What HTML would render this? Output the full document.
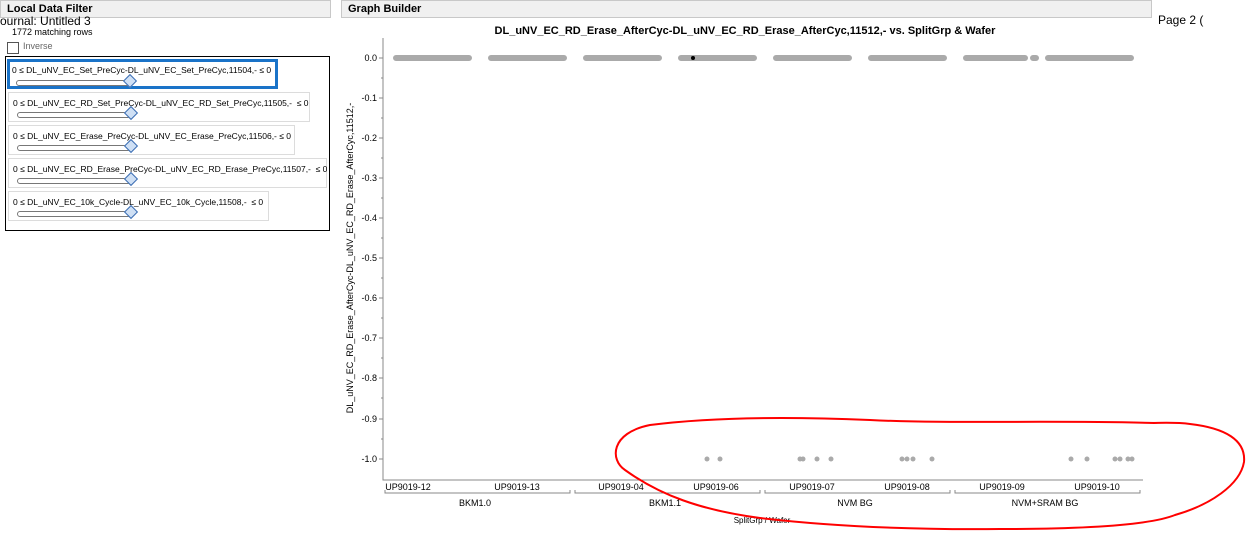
<!DOCTYPE html>
<html><head><meta charset="utf-8"><style>
body{margin:0;width:1246px;height:536px;background:#fff;font-family:"Liberation Sans",sans-serif;position:relative;overflow:hidden}
.hdr{position:absolute;height:17px;background:#f0f0f0;border:1px solid #c8c8c8;font-weight:bold;font-size:11px;line-height:17px;padding-left:6px;box-sizing:border-box}
.f{position:absolute;border:1px solid #dcdcdc;background:#fff;font-size:8.5px;height:30px;box-sizing:border-box}
.f span{position:absolute;left:4px;top:5px;white-space:nowrap}
.sl{position:absolute;left:8px;top:19px;width:114px;height:4px;border:1px solid #777;border-radius:3px}
.kn{position:absolute;left:117px;top:15px;width:8px;height:8px;border:1px solid #3b6db3;background:#cfe0f5;transform:rotate(45deg)}
</style></head><body>
<div class="hdr" style="left:0;top:0;width:331px;height:18px">Local Data Filter</div>
<div style="position:absolute;left:0;top:14px;font-size:12px">ournal: Untitled 3</div>
<div style="position:absolute;left:12px;top:27px;font-size:9px">1772 matching rows</div>
<div style="position:absolute;left:7px;top:42px;width:10px;height:10px;border:1px solid #555"></div>
<div style="position:absolute;left:23px;top:41px;font-size:9px;color:#666">Inverse</div>
<div style="position:absolute;left:5px;top:56px;width:325px;height:175px;border:1px solid #000;box-sizing:border-box"></div>
<div class="f" style="left:7px;top:59px;width:271px;border:3px solid #1a73c8"><span style="left:2px;top:3px">0 ≤ DL_uNV_EC_Set_PreCyc-DL_uNV_EC_Set_PreCyc,11504,- ≤ 0</span><div class="sl" style="left:6px;top:18px"></div><div class="kn" style="left:115px;top:14px"></div></div>
<div class="f" style="left:8px;top:92px;width:302px"><span>0 ≤ DL_uNV_EC_RD_Set_PreCyc-DL_uNV_EC_RD_Set_PreCyc,11505,- &nbsp;≤ 0</span><div class="sl"></div><div class="kn"></div></div>
<div class="f" style="left:8px;top:125px;width:287px"><span>0 ≤ DL_uNV_EC_Erase_PreCyc-DL_uNV_EC_Erase_PreCyc,11506,- ≤ 0</span><div class="sl"></div><div class="kn"></div></div>
<div class="f" style="left:8px;top:158px;width:319px"><span>0 ≤ DL_uNV_EC_RD_Erase_PreCyc-DL_uNV_EC_RD_Erase_PreCyc,11507,- &nbsp;≤ 0</span><div class="sl"></div><div class="kn"></div></div>
<div class="f" style="left:8px;top:191px;width:261px"><span>0 ≤ DL_uNV_EC_10k_Cycle-DL_uNV_EC_10k_Cycle,11508,- &nbsp;≤ 0</span><div class="sl"></div><div class="kn"></div></div>
<div class="hdr" style="left:341px;top:0;width:811px;height:18px">Graph Builder</div>
<div style="position:absolute;left:1158px;top:13px;font-size:12px">Page 2 (</div>
<svg width="1246" height="536" style="position:absolute;left:0;top:0" font-family="Liberation Sans" font-size="9">
<text x="745" y="34" text-anchor="middle" font-size="11" font-weight="bold">DL_uNV_EC_RD_Erase_AfterCyc-DL_uNV_EC_RD_Erase_AfterCyc,11512,- vs. SplitGrp &amp; Wafer</text>
<text transform="translate(353,258) rotate(-90)" text-anchor="middle" font-size="9">DL_uNV_EC_RD_Erase_AfterCyc-DL_uNV_EC_RD_Erase_AfterCyc,11512,-</text>
<g stroke="#888" fill="none">
<path d="M383 38V480H1143"/>
<path d="M379 58h4M379 98h4M379 138h4M379 178h4M379 218h4M379 258h4M379 298h4M379 338h4M379 378h4M379 419h4M379 459h4M381 78h2M381 118h2M381 158h2M381 198h2M381 238h2M381 278h2M381 318h2M381 358h2M381 398h2M381 439h2"/>
<path d="M385 490v3H570v-3M575 490v3H760v-3M765 490v3H950v-3M955 490v3H1140v-3"/>
</g>
<g text-anchor="end">
<text x="377" y="61">0.0</text><text x="377" y="101">-0.1</text><text x="377" y="141">-0.2</text><text x="377" y="181">-0.3</text><text x="377" y="221">-0.4</text><text x="377" y="261">-0.5</text><text x="377" y="301">-0.6</text><text x="377" y="341">-0.7</text><text x="377" y="381">-0.8</text><text x="377" y="422">-0.9</text><text x="377" y="462">-1.0</text></g>
<g stroke="#aaa" stroke-width="6" stroke-linecap="round">
<path d="M396 58H469M491 58H564M586 58H659M681 58H754M776 58H849M871 58H944M966 58H1025M1033 58H1036M1048 58H1131"/></g>
<circle cx="693" cy="58" r="2" fill="#000"/>
<g fill="#aaa"><circle cx="707" cy="459" r="2.5"/><circle cx="720" cy="459" r="2.5"/><circle cx="800" cy="459" r="2.5"/><circle cx="803" cy="459" r="2.5"/><circle cx="817" cy="459" r="2.5"/><circle cx="831" cy="459" r="2.5"/><circle cx="902" cy="459" r="2.5"/><circle cx="907" cy="459" r="2.5"/><circle cx="913" cy="459" r="2.5"/><circle cx="932" cy="459" r="2.5"/><circle cx="1071" cy="459" r="2.5"/><circle cx="1087" cy="459" r="2.5"/><circle cx="1115" cy="459" r="2.5"/><circle cx="1120" cy="459" r="2.5"/><circle cx="1128" cy="459" r="2.5"/><circle cx="1132" cy="459" r="2.5"/></g>
<g text-anchor="middle">
<text x="408" y="490">UP9019-12</text><text x="517" y="490">UP9019-13</text><text x="621" y="490">UP9019-04</text><text x="716" y="490">UP9019-06</text><text x="812" y="490">UP9019-07</text><text x="907" y="490">UP9019-08</text><text x="1002" y="490">UP9019-09</text><text x="1097" y="490">UP9019-10</text>
<text x="475" y="506">BKM1.0</text><text x="665" y="506">BKM1.1</text><text x="855" y="506">NVM BG</text><text x="1045" y="506">NVM+SRAM BG</text>
<text x="762" y="523" font-size="8">SplitGrp / Wafer</text></g>
<path d="M1155 423C1050 420 950 424 870 420C800 417 720 416 650 425C610 433 610 460 625 470C660 495 700 510 760 518C820 525 900 530 1000 529C1090 529 1150 525 1175 515C1210 505 1240 485 1244 462C1246 440 1225 428 1190 424C1175 422 1160 423 1150 423" stroke="#f00" stroke-width="2" fill="none"/>
</svg>
</body></html>
